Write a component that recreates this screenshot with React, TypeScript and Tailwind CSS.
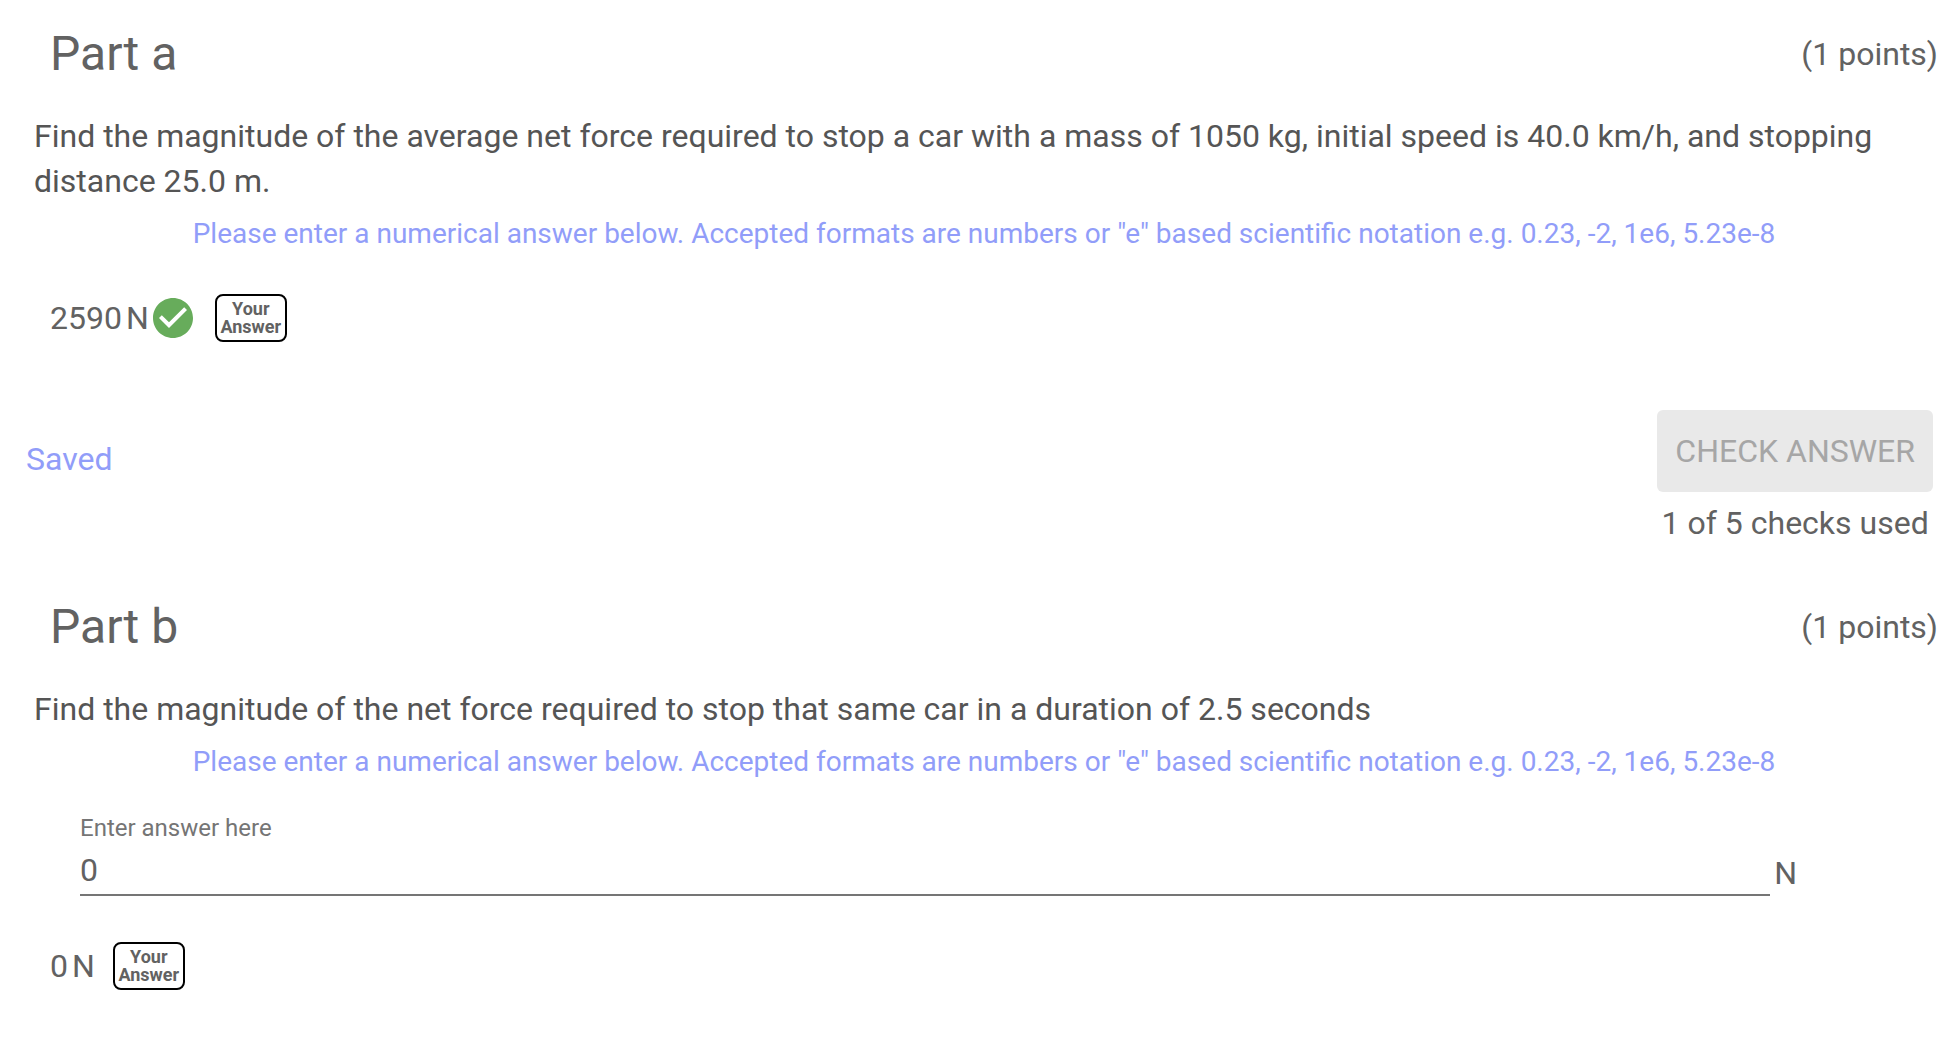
import type { ReactNode } from 'react'
import { MdCheckCircle } from 'react-icons/md'

const HINT =
  'Please enter a numerical answer below. Accepted formats are numbers or "e" based scientific notation e.g. 0.23, -2, 1e6, 5.23e-8'

export default function App() {
  return (
    <main className="min-h-screen bg-white font-['Roboto',sans-serif] text-[32px] leading-[45px] text-[#626262]">
      <Part
        title="Part a"
        question="Find the magnitude of the average net force required to stop a car with a mass of 1050 kg, initial speed is 40.0 km/h, and stopping distance 25.0 m."
      >
        <div className="mt-[38px]">
          <Answer value="2590" unit="N" correct />
        </div>
        <div className="mt-[68px] flex items-start justify-between pr-[21px] pl-[26px]">
          <p className="mt-[27px] text-[#919df9]">Saved</p>
          <div className="flex flex-col items-center gap-[9px]">
            <button
              type="button"
              disabled
              className="h-[82px] rounded-md bg-[#e9e9e9] px-[18px] text-[#a6a6a6] uppercase"
            >
              Check Answer
            </button>
            <p>1 of 5 checks used</p>
          </div>
        </div>
      </Part>

      <div className="mt-[27px]">
        <Part
          title="Part b"
          question="Find the magnitude of the net force required to stop that same car in a duration of 2.5 seconds"
        >
          <div className="mt-7 flex items-end gap-1 pr-[157px] pl-20">
            <div className="flex flex-1 flex-col">
              <label htmlFor="answer-b" className="text-2xl leading-8 text-[#757575]">
                Enter answer here
              </label>
              <input
                id="answer-b"
                type="text"
                defaultValue="0"
                className="h-[52px] w-full border-b-2 border-[#757575] pt-0.5 outline-none"
              />
            </div>
            <span>N</span>
          </div>
          <div className="mt-[46px]">
            <Answer value="0" unit="N" />
          </div>
        </Part>
      </div>
    </main>
  )
}

function Part({ title, question, children }: { title: string; question: string; children: ReactNode }) {
  return (
    <section>
      <header className="flex items-center justify-between pt-6 pr-4 pb-[22px] pl-[50px]">
        <h2 className="text-5xl leading-[60px]">{title}</h2>
        <span>(1 points)</span>
      </header>
      <div className="mt-2 flex flex-col gap-2 pr-5 pl-[34px]">
        <p className="text-[#555555]">{question}</p>
        <p className="text-center text-[28px] leading-[44px] text-[#919df9]">{HINT}</p>
      </div>
      {children}
    </section>
  )
}

function Answer({ value, unit, correct }: { value: string; unit: string; correct?: boolean }) {
  return (
    <div className="flex items-center pl-[50px]">
      <span>{value}</span>
      <span className="ml-1">{unit}</span>
      {correct && <MdCheckCircle size={48} className="shrink-0 text-[#67ac5b]" aria-label="Correct" />}
      <span className="ml-[18px] flex h-12 w-[72px] flex-col items-center justify-center rounded-lg border-2 border-black text-lg leading-[18px] font-bold">
        <span>Your</span>
        <span>Answer</span>
      </span>
    </div>
  )
}
